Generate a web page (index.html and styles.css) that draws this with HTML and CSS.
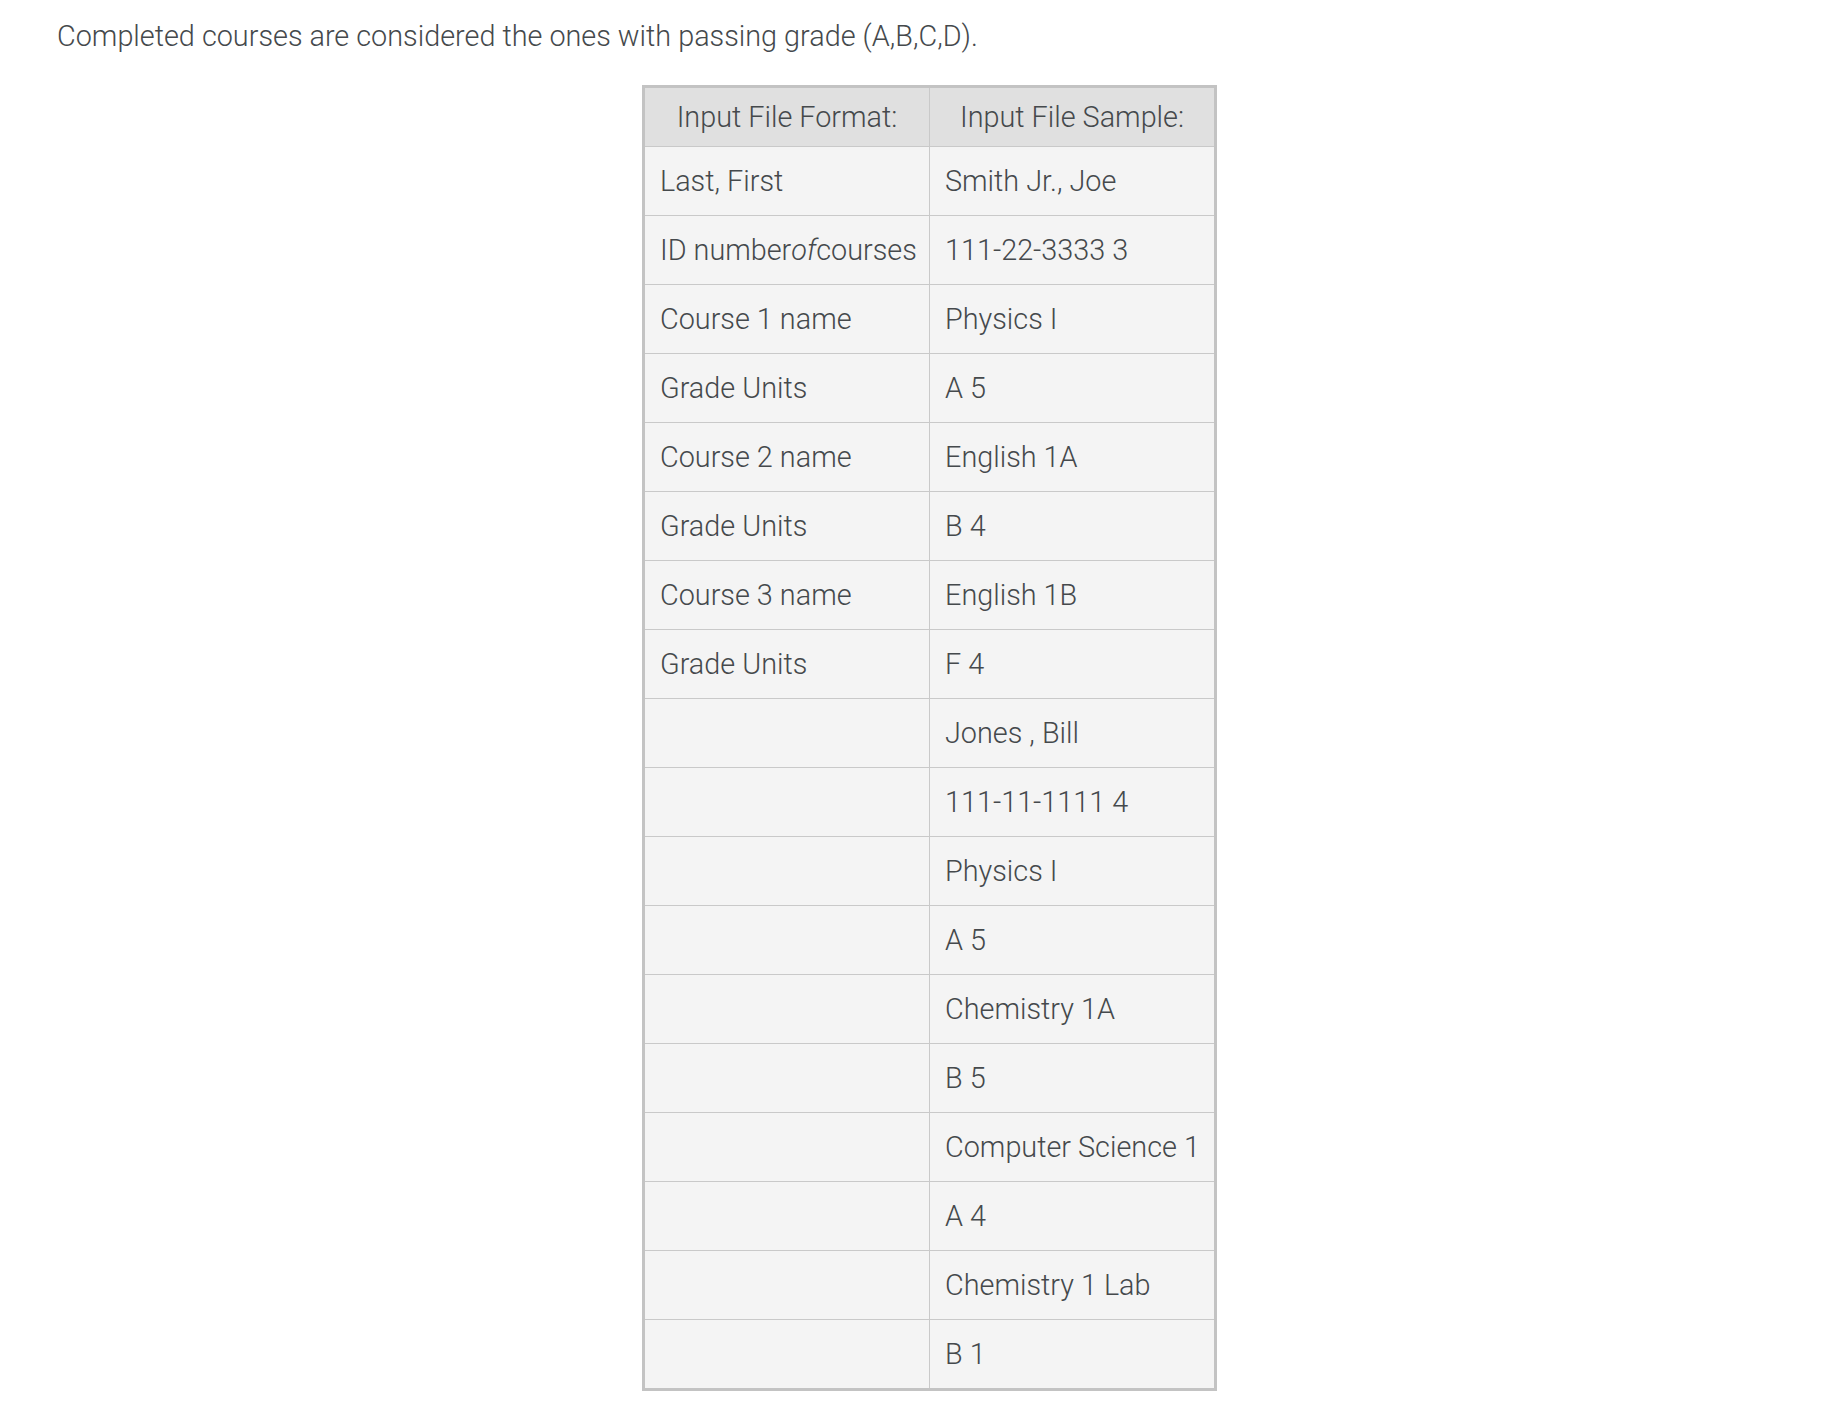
FILE: index.html
```html
<!DOCTYPE html>
<html>
<head>
<meta charset="utf-8">
<link rel="stylesheet" href="styles.css">
</head>
<body>
<div class="content">
  <p class="intro">Completed courses are considered the ones with passing grade (A,B,C,D).</p>
  <table class="sample">
    <thead>
      <tr><th>Input File Format:</th><th>Input File Sample:</th></tr>
    </thead>
    <tbody>
      <tr><td>Last, First</td><td>Smith Jr., Joe</td></tr>
      <tr><td>ID number<em>of</em>courses</td><td>111-22-3333 3</td></tr>
      <tr><td>Course 1 name</td><td>Physics I</td></tr>
      <tr><td>Grade Units</td><td>A 5</td></tr>
      <tr><td>Course 2 name</td><td>English 1A</td></tr>
      <tr><td>Grade Units</td><td>B 4</td></tr>
      <tr><td>Course 3 name</td><td>English 1B</td></tr>
      <tr><td>Grade Units</td><td>F 4</td></tr>
      <tr><td></td><td>Jones , Bill</td></tr>
      <tr><td></td><td>111-11-1111 4</td></tr>
      <tr><td></td><td>Physics I</td></tr>
      <tr><td></td><td>A 5</td></tr>
      <tr><td></td><td>Chemistry 1A</td></tr>
      <tr><td></td><td>B 5</td></tr>
      <tr><td></td><td>Computer Science 1</td></tr>
      <tr><td></td><td>A 4</td></tr>
      <tr><td></td><td>Chemistry 1 Lab</td></tr>
      <tr><td></td><td>B 1</td></tr>
    </tbody>
  </table>
</div>
</body>
</html>
```

FILE: styles.css
```css
html, body {
  margin: 0;
  padding: 0;
  background: #ffffff;
}

body {
  font-family: Roboto, "Liberation Sans", sans-serif;
  font-weight: 300;
  color: #45494c;
}

.content {
  padding: 15px 42px 0 57px;
}

.intro {
  margin: 0 0 28px 0;
  font-size: 28.8px;
  line-height: 42px;
}

.sample {
  border-collapse: collapse;
  margin: 0 auto;
  border: 3px solid #c3c3c3;
  font-size: 28.8px;
  table-layout: fixed;
  width: 575px;
}

.sample th,
.sample td {
  border: 1px solid #c9c9c9;
  width: 50%;
  padding: 0 15px;
  text-align: left;
  font-weight: 300;
  white-space: nowrap;
}

.sample th {
  background: #e0e0e0;
  text-align: center;
  height: 58px;
}

.sample td {
  background: #f4f4f4;
  height: 68px;
}

.sample em {
  font-style: italic;
}
```
